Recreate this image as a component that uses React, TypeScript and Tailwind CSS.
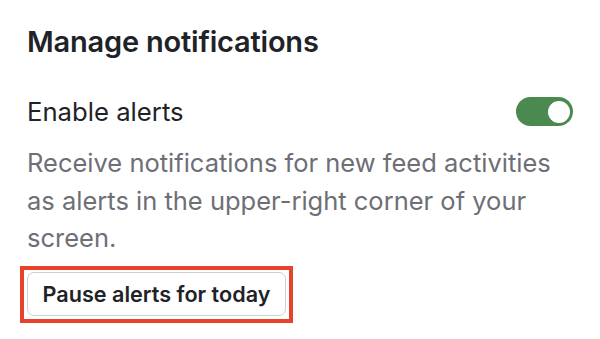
import React from "react";

export default function App() {
  return (
    <div
      className="w-[600px] h-[339px] bg-white overflow-hidden pl-[27px] pr-[27px] pt-[24px]"
      style={{ fontFamily: "Inter, 'Noto Sans', sans-serif" }}
    >
      <h1 className="text-[29px] leading-[36px] font-semibold text-[#1f2328] tracking-[-0.2px]">
        Manage notifications
      </h1>
      <div className="mt-[37px] flex items-center justify-between h-[29px]">
        <span className="text-[25.7px] leading-[29px] text-[#1f2328]">Enable alerts</span>
        <div className="w-[57px] h-[29px] rounded-full bg-[#4a8a51] flex items-center justify-end pr-[3px]">
          <div className="w-[22px] h-[22px] rounded-full bg-white" />
        </div>
      </div>
      <p className="mt-[18px] text-[25.5px] leading-[37.5px] text-[#6e6f76]">
        Receive notifications for new feed activities as alerts in the upper-right corner of your screen.
      </p>
      <div className="mt-[9.5px] ml-[-7px] inline-flex border-[4px] border-[#e8432a] pt-[2px] pl-[3px] pr-[3px] pb-[3px]">
        <button className="w-[259px] h-[44px] rounded-[7px] border border-[#cfcfd2] bg-white text-[21.6px] font-semibold text-[#1f2328] flex items-center justify-center">
          Pause alerts for today
        </button>
      </div>
    </div>
  );
}
